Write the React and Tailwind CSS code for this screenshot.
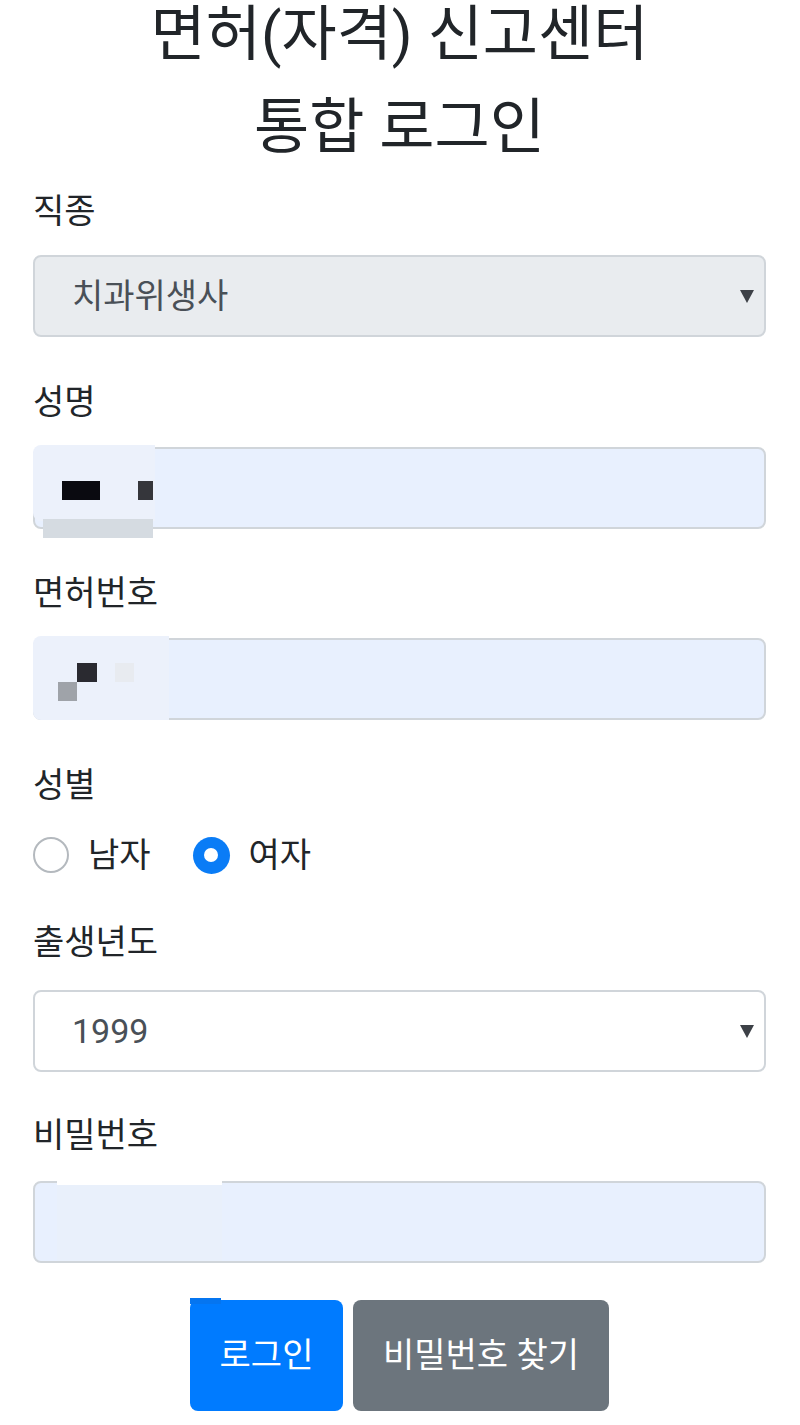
import React from "react";

const FONT = "font-[Roboto,'Noto_Sans_CJK_KR',sans-serif]";

function Label({ children, className = "" }) {
  return (
    <div className={`text-[34px] leading-[46px] text-[#212529] ${className}`}>{children}</div>
  );
}

function Caret() {
  return (
    <svg width="14" height="13" viewBox="0 0 14 13" className="shrink-0">
      <polygon points="0,0 14,0 7,13" fill="#3d4147" />
    </svg>
  );
}

function SelectBox({ value, gray }) {
  return (
    <div
      className={`h-[82px] rounded-[8px] border-2 border-[#d0d5da] flex items-center justify-between pl-[37px] pr-[10px] text-[#495057] ${
        gray ? "bg-[#e9ecef]" : "bg-white"
      }`}
    >
      <span className="text-[34px] leading-none">{value}</span>
      <Caret />
    </div>
  );
}

function FilledInput({ children }) {
  return (
    <div className="relative h-[82px] rounded-[8px] border-2 border-[#d0d5da] bg-[#e8f0fe]">{children}</div>
  );
}

function Radio({ checked, label }) {
  return (
    <label className="flex items-center gap-[19px]">
      {checked ? (
        <span className="w-[37px] h-[37px] rounded-full bg-[#0a7cf6] flex items-center justify-center">
          <span className="w-[14px] h-[14px] rounded-full bg-white" />
        </span>
      ) : (
        <span className="w-[36px] h-[36px] rounded-full border-2 border-[#b4b9be] bg-white" />
      )}
      <span className="text-[34px] leading-[46px] text-[#212529]">{label}</span>
    </label>
  );
}

export default function App() {
  return (
    <div className={`${FONT} bg-white min-h-[1425px] pl-[33px] pr-[34px] overflow-hidden`}>
      <h1 className="text-center text-[60px] leading-[93px] font-normal text-[#212529] -mt-[12px] mb-[14px]">
        면허(자격) 신고센터
        <br />
        통합 로그인
      </h1>

      <Label className="mb-[21px]">직종</Label>
      <SelectBox value="치과위생사" gray />

      <Label className="mt-[42px] mb-[22px]">성명</Label>
      <FilledInput>
        <div className="absolute left-[-2px] top-[-4px] w-[122px] h-[76px] bg-[#ecf1fb] rounded-l-[8px]" />
        <div className="absolute left-[27px] top-[32px] w-[38px] h-[19px] bg-[#0a0a10]" />
        <div className="absolute left-[103px] top-[32px] w-[15px] h-[19px] bg-[#35363b]" />
        <div className="absolute left-[8px] top-[70px] w-[110px] h-[19px] bg-[#d5dbe1]" />
      </FilledInput>

      <Label className="mt-[41px] mb-[22px]">면허번호</Label>
      <FilledInput>
        <div className="absolute left-[-2px] top-[-4px] w-[136px] h-[84px] bg-[#ecf1fb] rounded-l-[8px]" />
        <div className="absolute left-[42px] top-[23px] w-[20px] h-[19px] bg-[#2a2a30]" />
        <div className="absolute left-[23px] top-[42px] w-[19px] h-[19px] bg-[#9fa3a9]" />
        <div className="absolute left-[80px] top-[23px] w-[19px] h-[19px] bg-[#e8ebf0]" />
      </FilledInput>

      <Label className="mt-[42px] mb-[24px]">성별</Label>
      <div className="flex items-center gap-[42px]">
        <Radio label="남자" />
        <Radio label="여자" checked />
      </div>

      <Label className="mt-[41px] mb-[25px]">출생년도</Label>
      <SelectBox value="1999" />

      <Label className="mt-[40px] mb-[23px]">비밀번호</Label>
      <FilledInput>
        <div className="absolute left-[22px] top-[-2px] bottom-[0px] w-[165px] bg-[#e9f0fb] border-t-4 border-white" />
      </FilledInput>

      <div className="flex justify-center gap-[10px] mt-[37px]">
        <button className="relative h-[111px] w-[153px] rounded-[8px] bg-[#007bff] text-white text-[34px]">
          <span className="absolute left-0 top-[-2px] w-[31px] h-[6px] bg-[#0575f0]" />
          로그인
        </button>
        <button className="h-[111px] w-[256px] rounded-[8px] bg-[#6c757d] text-white text-[34px]">
          비밀번호 찾기
        </button>
      </div>
    </div>
  );
}
